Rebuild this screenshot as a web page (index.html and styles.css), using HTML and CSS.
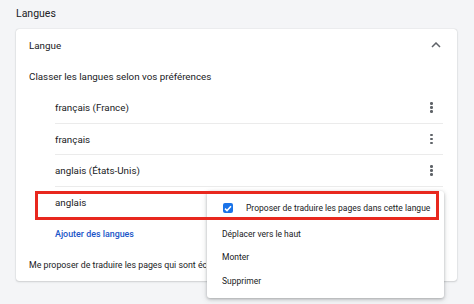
FILE: index.html
```html
<!DOCTYPE html>
<html lang="fr">
<head>
<meta charset="utf-8">
<link rel="stylesheet" href="styles.css">
</head>
<body>
<div class="page">
  <div class="title">Langues</div>
  <div class="card">
    <div class="card-head">
      <span>Langue</span>
      <svg class="chev" width="10" height="6" viewBox="0 0 10 6"><path d="M1 5 L5 1 L9 5" fill="none" stroke="#5f6368" stroke-width="1.5"/></svg>
    </div>
    <div class="sub">Classer les langues selon vos préférences</div>
    <div class="list">
      <div class="row"><span>français (France)</span><span class="dots"><i></i><i></i><i></i></span></div>
      <div class="row"><span>français</span><span class="dots"><i></i><i></i><i></i></span></div>
      <div class="row"><span>anglais (États-Unis)</span><span class="dots"><i></i><i></i><i></i></span></div>
      <div class="row last"><span>anglais</span></div>
      <div class="add">Ajouter des langues</div>
    </div>
    <div class="foot"><span class="foot-text">Me proposer de traduire les pages qui sont écrites dans une langue que je ne lis pas</span></div>
  </div>
  <div class="menu">
    <div class="mi check"><span class="box"><svg width="8" height="7" viewBox="0 0 8 7"><path d="M1 3.6 L3 5.6 L7 1.2" fill="none" stroke="#fff" stroke-width="1.5"/></svg></span>Proposer de traduire les pages dans cette langue</div>
    <div class="mi">Déplacer vers le haut</div>
    <div class="mi">Monter</div>
    <div class="mi">Supprimer</div>
  </div>
  <div class="hl"></div>
</div>
</body>
</html>
```
FILE: styles.css
```css
* { box-sizing: border-box; }
html, body { margin: 0; padding: 0; }
body {
  width: 474px; height: 304px; overflow: hidden;
  background: #f4f5f7;
  font-family: Roboto, "Liberation Sans", sans-serif;
  font-size: 9.8px;
  color: #202124;
}
.page { position: relative; padding: 7px 17px 0 16px; }
.title { height: 22px; line-height: 14px; font-size: 10.5px; }
.card {
  background: #fff;
  border-radius: 3px;
  box-shadow: 0 0 1px rgba(60,64,67,.35), 0 1px 2px rgba(60,64,67,.18);
  height: 252px;
  padding: 0 0 0 13px;
}
.card-head { height: 32px; display: flex; align-items: center; justify-content: space-between; padding-right: 16px; padding-top: 1px; }
.chev { margin-top: -1px; }
.sub { height: 31px; display: flex; align-items: center; }
.list { padding-left: 26px; padding-right: 14px; }
.row { height: 31.7px; display: flex; align-items: center; justify-content: space-between; border-bottom: 1px solid #ebebeb; }
.row.last { border-bottom: none; }
.dots { display: flex; flex-direction: column; gap: 1.5px; width: 3px; margin-right: 10px; }
.dots i { display: block; width: 2.5px; height: 2.5px; border-radius: 50%; background: #5f6368; }
.add { height: 31px; display: flex; align-items: center; color: #1a55c8; font-weight: 500; font-size: 8.9px; }
.foot { height: 31px; display: flex; align-items: center; }
.foot-text { display: block; width: 177px; white-space: nowrap; overflow: hidden; font-size: 8.8px; }
.menu {
  position: absolute; left: 207px; top: 191px; width: 237px; height: 107px;
  background: #fff; border-radius: 3px;
  box-shadow: 0 1px 3px rgba(60,64,67,.35), 0 2px 6px rgba(60,64,67,.15);
  padding-top: 3px;
}
.mi { height: 23.5px; display: flex; align-items: center; padding-left: 15px; white-space: nowrap; font-size: 8.5px; }
.mi.check { height: 28px; padding-left: 16px; }
.box { width: 10px; height: 10px; background: #1a73e8; border-radius: 2px; display: flex; align-items: center; justify-content: center; margin-right: 13px; }
.hl { position: absolute; left: 35px; top: 191px; width: 404px; height: 29px; border: 3px solid #e8281e; }
```
